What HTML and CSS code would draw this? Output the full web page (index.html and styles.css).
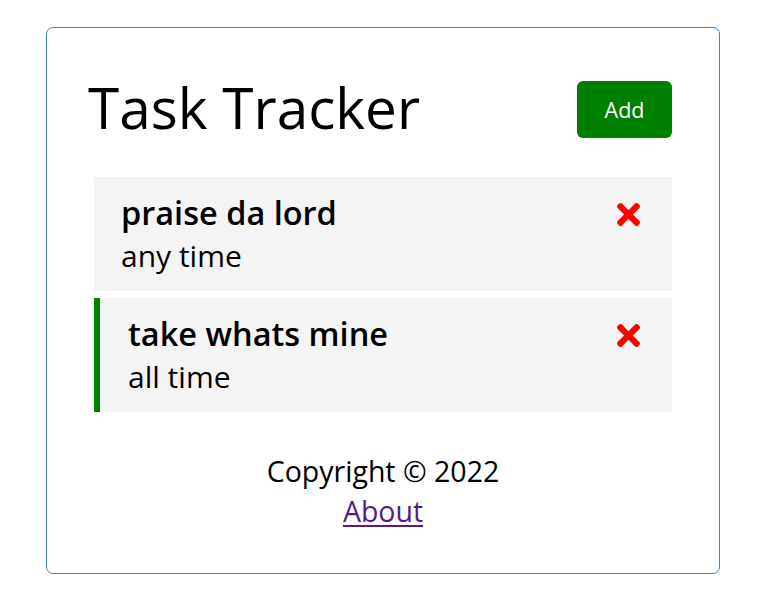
FILE: index.html
```html
<!DOCTYPE html>
<html lang="en">
<head>
<meta charset="utf-8">
<title>Task Tracker</title>
<link rel="stylesheet" href="styles.css">
</head>
<body>
<div class="container">
  <header class="header">
    <h1 class="title">Task Tracker</h1>
    <button class="btn">Add</button>
  </header>
  <div class="tasks">
    <div class="task">
      <h3 class="task-title">praise da lord
        <svg class="del" viewBox="0 80 352 352" aria-hidden="true"><path d="M242.72 256l100.07-100.07c12.28-12.28 12.28-32.19 0-44.48l-22.24-22.24c-12.28-12.28-32.19-12.28-44.48 0L176 189.28 75.93 89.21c-12.28-12.28-32.19-12.28-44.48 0L9.21 111.45c-12.28 12.28-12.28 32.19 0 44.48L109.28 256 9.21 356.07c-12.28 12.28-12.28 32.19 0 44.48l22.24 22.24c12.28 12.28 32.2 12.28 44.48 0L176 322.72l100.07 100.07c12.28 12.28 32.2 12.28 44.48 0l22.24-22.24c12.28-12.28 12.28-32.19 0-44.48L242.72 256z"/></svg>
      </h3>
      <p class="task-day">any time</p>
    </div>
    <div class="task reminder">
      <h3 class="task-title">take whats mine
        <svg class="del" viewBox="0 80 352 352" aria-hidden="true"><path d="M242.72 256l100.07-100.07c12.28-12.28 12.28-32.19 0-44.48l-22.24-22.24c-12.28-12.28-32.19-12.28-44.48 0L176 189.28 75.93 89.21c-12.28-12.28-32.19-12.28-44.48 0L9.21 111.45c-12.28 12.28-12.28 32.19 0 44.48L109.28 256 9.21 356.07c-12.28 12.28-12.28 32.19 0 44.48l22.24 22.24c12.28 12.28 32.2 12.28 44.48 0L176 322.72l100.07 100.07c12.28 12.28 32.2 12.28 44.48 0l22.24-22.24c12.28-12.28 12.28-32.19 0-44.48L242.72 256z"/></svg>
      </h3>
      <p class="task-day">all time</p>
    </div>
  </div>
  <footer class="footer">
    <p class="copy">Copyright © 2022</p>
    <a class="about" href="#about">About</a>
  </footer>
</div>
</body>
</html>
```
FILE: styles.css
```css
* { box-sizing: border-box; }
body {
  margin: 0;
  font-family: "Open Sans", "Noto Sans", sans-serif;
  color: #000;
  background: #fff;
}
.container {
  width: 674px;
  margin: 27px 0 0 46px;
  border: 1px solid steelblue;
  border-radius: 7px;
  padding: 41px;
  height: 547px;
}
.header {
  display: flex;
  justify-content: space-between;
  align-items: center;
  height: 57px;
  margin: 12px 0 39px;
}
.title {
  margin: 0 0 5px;
  font-size: 56.7px;
  font-weight: 400;
  line-height: 57px;
}
.btn {
  width: 95px;
  height: 57px;
  margin-right: 6px;
  border: none;
  border-radius: 6px;
  background: #008000;
  color: #fff;
  font-family: inherit;
  font-size: 21.5px;
  font-weight: 400;
  padding: 0;
  cursor: pointer;
}
.tasks {
  display: flex;
  flex-direction: column;
  gap: 7px;
  margin: 0 6px;
}
.task {
  background: #f4f4f4;
  height: 114px;
  padding: 16px 32px 15px 27px;
}
.task.reminder {
  border-left: 6px solid #008000;
  padding-left: 28px;
}
.task-title {
  display: flex;
  justify-content: space-between;
  align-items: center;
  margin: 0;
  font-size: 32.5px;
  font-weight: 600;
  line-height: 40px;
}
.del {
  width: 23px;
  height: 23px;
  fill: #ff0000;
  flex: none;
  margin-top: 2px;
}
.task-day {
  margin: 3px 0 0;
  font-size: 30px;
  font-weight: 400;
  line-height: 40px;
}
.footer {
  margin-top: 39px;
  text-align: center;
}
.copy {
  margin: 0;
  font-size: 28.5px;
  line-height: 40px;
}
.about {
  display: inline-block;
  font-size: 28.5px;
  line-height: 40px;
  color: #551a8b;
  text-decoration: underline;
  text-decoration-thickness: 2px;
  text-underline-offset: 3px;
}
```
